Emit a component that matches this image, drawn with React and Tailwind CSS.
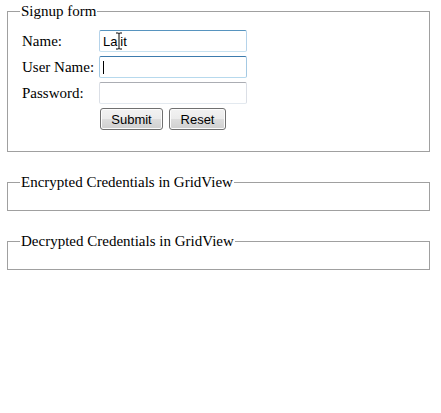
import React from "react";

const fields = [
  { id: "name", label: "Name:", value: "Lalit", state: "hover" },
  { id: "user", label: "User Name:", value: "", state: "focus" },
  { id: "pass", label: "Password:", value: "", state: "idle", type: "password" },
];

const inputBorder = {
  hover: "border-[#b5d3ea] border-t-[#5794bf] border-b-[#c7e2f1]",
  focus: "border-[#a4c9e3] border-t-[#3d7bad] border-b-[#b7d9ed]",
  idle: "border-[#dbdfe6] border-t-[#abadb3] border-b-[#e3e9ef]",
};

function IBeam() {
  return (
    <svg width="8" height="18" viewBox="0 0 8 18" className="absolute left-[16px] top-[2px] pointer-events-none">
      <path
        d="M1 1h2.5l0.5 0.8 0.5-0.8h2.5M4 1.8v14.4M1 17h2.5l0.5-0.8 0.5 0.8h2.5"
        stroke="#fff"
        strokeWidth="2.6"
        fill="none"
      />
      <path
        d="M1 1h2.5l0.5 0.8 0.5-0.8h2.5M4 1.8v14.4M1 17h2.5l0.5-0.8 0.5 0.8h2.5"
        stroke="#000"
        strokeWidth="1"
        fill="none"
      />
    </svg>
  );
}

function Win7Button({ children, width }) {
  return (
    <button
      type="button"
      className={`${width} h-[22px] rounded-[3px] border border-[#707070] bg-[linear-gradient(#f2f2f2_0%,#ebebeb_50%,#dddddd_50%,#cfcfcf_100%)] shadow-[inset_0_0_0_1px_#fcfcfc] font-['Liberation_Sans',Arial,sans-serif] text-[13px] leading-none text-black`}
    >
      {children}
    </button>
  );
}

function Box({ title, children, className = "" }) {
  return (
    <fieldset className={`ml-[7px] w-[423px] border border-[#a0a0a0] px-[12px] ${className}`}>
      <legend className="px-[1px] text-[15px] leading-[18px]">{title}</legend>
      {children}
    </fieldset>
  );
}

export default function App() {
  return (
    <div className="w-[441px] h-[413px] bg-white text-black font-['Liberation_Serif','Times_New_Roman',serif] pt-[2px]">
      <Box title="Signup form" className="pt-[10px] pb-[21px]">
        <div className="ml-[2px] grid grid-cols-[77px_148px] gap-y-[4px] items-center">
          {fields.map((f) => (
            <React.Fragment key={f.id}>
              <label htmlFor={f.id} className="text-[15px] leading-[18px] whitespace-nowrap">
                {f.label}
              </label>
              <div className="relative h-[22px]">
                <input
                  id={f.id}
                  type={f.type || "text"}
                  defaultValue={f.value}
                  readOnly
                  className={`block w-[148px] h-[22px] rounded-[2px] border bg-white pl-[3px] font-['Liberation_Sans',Arial,sans-serif] text-[13px] text-black outline-none ${inputBorder[f.state]}`}
                />
                {f.state === "hover" && <IBeam />}
                {f.state === "focus" && (
                  <span className="absolute left-[4px] top-[5px] w-[1px] h-[13px] bg-black" />
                )}
              </div>
            </React.Fragment>
          ))}
          <div />
          <div className="flex gap-[6px] pl-[1px]">
            <Win7Button width="w-[63px]">Submit</Win7Button>
            <Win7Button width="w-[57px]">Reset</Win7Button>
          </div>
        </div>
      </Box>

      <Box title="Encrypted Credentials in GridView" className="mt-[21px] pt-[0px] pb-[19px]" />

      <Box title="Decrypted Credentials in GridView" className="mt-[21px] pt-[0px] pb-[19px]" />
    </div>
  );
}
